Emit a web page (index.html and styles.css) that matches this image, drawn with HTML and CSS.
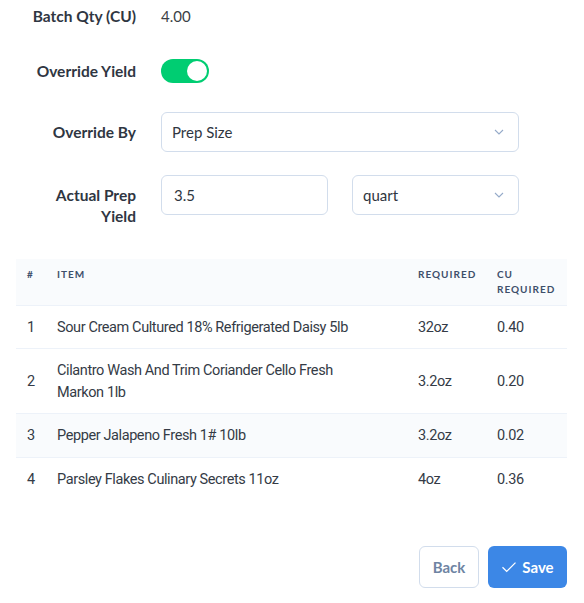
FILE: index.html
```html
<!DOCTYPE html>
<html>
<head>
<meta charset="utf-8">
<link rel="stylesheet" href="styles.css">
</head>
<body>
<div class="page">
  <div class="form-row row-batch">
    <div class="label">Batch Qty (CU)</div>
    <div class="value">4.00</div>
  </div>
  <div class="form-row row-toggle">
    <div class="label">Override Yield</div>
    <div class="toggle"><span class="knob"></span></div>
  </div>
  <div class="form-row row-select">
    <div class="label label-pad">Override By</div>
    <div class="select wide">
      <span>Prep Size</span>
      <svg class="chev" width="10" height="6" viewBox="0 0 10 6"><path d="M1 1l4 4 4-4" fill="none" stroke="#95aac9" stroke-width="1.1"/></svg>
    </div>
  </div>
  <div class="form-row row-yield">
    <div class="label label-pad">Actual Prep Yield</div>
    <div class="inputs">
      <div class="input">3.5</div>
      <div class="select unit">
        <span>quart</span>
        <svg class="chev" width="10" height="6" viewBox="0 0 10 6"><path d="M1 1l4 4 4-4" fill="none" stroke="#95aac9" stroke-width="1.1"/></svg>
      </div>
    </div>
  </div>

  <table class="items">
    <colgroup>
      <col class="c-num"><col class="c-item"><col class="c-req"><col class="c-cu">
    </colgroup>
    <thead>
      <tr>
        <th>#</th>
        <th>Item</th>
        <th>Required</th>
        <th class="th-cu">CU Required</th>
      </tr>
    </thead>
    <tbody>
      <tr><td>1</td><td class="item">Sour Cream Cultured 18% Refrigerated Daisy 5lb</td><td>32oz</td><td>0.40</td></tr>
      <tr><td>2</td><td class="item">Cilantro Wash And Trim Coriander Cello Fresh Markon 1lb</td><td>3.2oz</td><td>0.20</td></tr>
      <tr class="hover"><td>3</td><td class="item">Pepper Jalapeno Fresh 1# 10lb</td><td>3.2oz</td><td>0.02</td></tr>
      <tr><td>4</td><td class="item">Parsley Flakes Culinary Secrets 11oz</td><td>4oz</td><td>0.36</td></tr>
    </tbody>
  </table>

  <div class="actions">
    <button class="btn btn-back">Back</button>
    <button class="btn btn-save"><svg width="16" height="12" viewBox="0 0 16 12"><path d="M1.5 6.2l4.2 4.2L14.5 1.6" fill="none" stroke="#fff" stroke-width="1.3"/></svg>Save</button>
  </div>
</div>
</body>
</html>
```
FILE: styles.css
```css
* { box-sizing: border-box; }
html, body { margin: 0; padding: 0; background: #fff; }
body {
  font-family: Lato, "Liberation Sans", sans-serif;
  color: #333a45;
  width: 584px;
  height: 603px;
  overflow: hidden;
}
.page { padding: 6px 17px 0 16px; }

.form-row { display: flex; align-items: flex-start; gap: 25px; }
.label {
  width: 120px;
  padding-left: 10px;
  flex: none;
  text-align: right;
  font-weight: 700;
  font-size: 15.5px;
  line-height: 21px;
  color: #2f3642;
}
.label-pad { padding-top: 9.5px; }
.value { font-size: 15px; line-height: 21px; color: #3b3f46; }

.row-batch { height: 21px; }
.row-toggle { margin-top: 32px; align-items: center; height: 24px; }
.row-select { margin-top: 29px; }
.row-yield { margin-top: 23px; }

.toggle {
  width: 48px; height: 24px;
  border-radius: 12px;
  background: #00cd72;
  position: relative;
}
.knob {
  position: absolute;
  right: 2px; top: 2px;
  width: 20px; height: 20px;
  border-radius: 50%;
  background: #fff;
}

.select, .input {
  height: 40px;
  border: 1px solid #d2ddec;
  border-radius: 6px;
  display: flex;
  align-items: center;
  font-size: 15px;
  color: #30363f;
  background: #fff;
}
.select { justify-content: space-between; padding: 0 14px 0 10px; }
.select.wide { width: 358px; }
.inputs { display: flex; gap: 24px; }
.input { width: 167px; padding-left: 12px; }
.select.unit { width: 167px; }
.chev { display: block; }

.items {
  margin-top: 32px;
  width: 551px;
  border-collapse: collapse;
  table-layout: fixed;
}
.c-num { width: 30px; }
.c-item { width: 361px; }
.c-req { width: 79px; }
.c-cu { width: 81px; }

.items th {
  background: #f9fbfd;
  font-size: 10px;
  line-height: 15px;
  font-weight: 700;
  letter-spacing: 0.1em;
  text-transform: uppercase;
  color: #3e4f6b;
  text-align: left;
  vertical-align: top;
  padding: 8px 0 8px 11px;
  height: 46px;
}
.items td {
  font-family: Roboto, "Liberation Sans", sans-serif;
  font-size: 14.5px;
  letter-spacing: -0.4px;
  line-height: 21.5px;
  color: #343b46;
  padding: 11px 0 10px 11px;
  border-top: 1px solid #edf2f9;
  vertical-align: middle;
}
.items td.item { padding-right: 45px; }
.items tr.hover td { background: #f9fbfd; }

.actions {
  display: flex;
  justify-content: flex-end;
  gap: 9px;
  margin-top: 46px;
}
.btn {
  height: 42px;
  border-radius: 6px;
  font-family: Lato, "Liberation Sans", sans-serif;
  font-size: 15px;
  font-weight: 700;
  display: flex;
  align-items: center;
  justify-content: center;
  padding: 0;
}
.btn-back {
  width: 60px;
  background: #fff;
  border: 1.5px solid #d2ddec;
  color: #6e84a3;
}
.btn-save {
  width: 79px;
  background: #3c87e6;
  border: none;
  color: #fff;
  gap: 5px;
}
```
